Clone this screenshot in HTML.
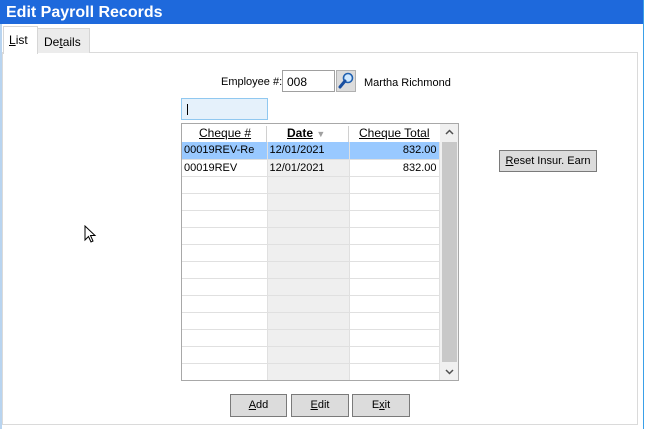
<!DOCTYPE html>
<html><head><style>
*{margin:0;padding:0;box-sizing:border-box}
body{width:646px;height:429px;background:#fff;position:relative;overflow:hidden;font-family:"Liberation Sans",Arial,sans-serif;font-size:11px;color:#000}
.a{position:absolute}
.btn{position:absolute;background:#dcdcdc;border:1px solid #7a7a7a;text-align:center;font-size:11px;line-height:20px}
table{border-collapse:collapse;table-layout:fixed}
td{height:17px;border-bottom:1px solid #e0e0e0;border-right:1px solid #e0e0e0;padding:0 2px;font-size:11px;white-space:nowrap;overflow:hidden}
</style></head><body>
<div class="a" style="left:0;top:0;width:643px;height:24px;background:#1e69dc;color:#fff;font-weight:bold;font-size:16px;line-height:25px;padding-left:6px">Edit Payroll Records</div>
<div class="a" style="left:643px;top:0;width:1px;height:429px;background:#3aa0e8"></div>
<div class="a" style="left:0;top:24px;width:2px;height:405px;background:#b8d4f0"></div>
<div class="a" style="left:2px;top:52px;width:636px;height:373px;border:1px solid #dadada"></div>
<div class="a" style="left:37px;top:28px;width:53px;height:25px;background:#ececec;border:1px solid #d6d6d6;border-bottom:none;line-height:26px;padding-left:6px;font-size:12px">De<u>t</u>ails</div>
<div class="a" style="left:3px;top:26px;width:35px;height:28px;background:#fff;border:1px solid #d6d6d6;border-bottom:none;line-height:26px;padding-left:5px;font-size:12px"><u>L</u>ist</div>

<div class="a" style="left:221px;top:76px">Employee #:</div>
<div class="a" style="left:282px;top:70px;width:53px;height:22px;border:1px solid #a0a0a0;padding:4px 0 0 4px;font-size:12px">008</div>
<div class="a" style="left:336px;top:70px;width:20px;height:22px;background:#dcdcdc;border:1px solid #b0b0b0">
<svg width="18" height="20" viewBox="0 0 18 20"><circle cx="11" cy="7" r="4.5" fill="#cfe8ff" stroke="#2060b0" stroke-width="1.6"/><path d="M8 10 L3 16" stroke="#1a4fa0" stroke-width="3" stroke-linecap="round"/></svg></div>
<div class="a" style="left:364px;top:77px">Martha Richmond</div>

<div class="a" style="left:181px;top:98px;width:87px;height:22px;background:#e5f1fb;border:1px solid #90c8f0"><div style="position:absolute;left:5px;top:5px;width:1px;height:11px;background:#000"></div></div>

<div class="a" style="left:181px;top:123px;width:278px;height:258px;border:1px solid #a8a8a8;overflow:hidden">
<div class="a" style="left:0;top:0;width:257px;height:19px;border-bottom:1px solid #404040;font-size:12px;line-height:18px">
<span class="a" style="left:17px"><u>Cheque #</u></span>
<span class="a" style="left:105px;font-weight:bold"><u>Date</u> <span style="color:#a0a0a0;font-size:9px">▼</span></span>
<span class="a" style="left:177px"><u>Cheque Total</u></span>
<div class="a" style="left:84px;top:2px;width:1px;height:16px;background:#d0d0d0"></div>
<div class="a" style="left:166px;top:2px;width:1px;height:16px;background:#d0d0d0"></div>
</div>
<table class="a" style="left:0;top:18px;width:257px">
<colgroup><col style="width:85px"><col style="width:82px"><col style="width:90px"></colgroup>
<tr style="background:#99c9ff"><td>00019REV-Re</td><td>12/01/2021</td><td style="text-align:right">832.00</td></tr>
<tr><td>00019REV</td><td style="background:#efefef">12/01/2021</td><td style="text-align:right">832.00</td></tr>
<tr><td></td><td style="background:#efefef"></td><td></td></tr>
<tr><td></td><td style="background:#efefef"></td><td></td></tr>
<tr><td></td><td style="background:#efefef"></td><td></td></tr>
<tr><td></td><td style="background:#efefef"></td><td></td></tr>
<tr><td></td><td style="background:#efefef"></td><td></td></tr>
<tr><td></td><td style="background:#efefef"></td><td></td></tr>
<tr><td></td><td style="background:#efefef"></td><td></td></tr>
<tr><td></td><td style="background:#efefef"></td><td></td></tr>
<tr><td></td><td style="background:#efefef"></td><td></td></tr>
<tr><td></td><td style="background:#efefef"></td><td></td></tr>
<tr><td></td><td style="background:#efefef"></td><td></td></tr>
<tr><td></td><td style="background:#efefef"></td><td></td></tr>
</table>
<div class="a" style="left:258px;top:0;width:19px;height:256px;background:#f0f0f0">
<div class="a" style="left:2px;top:18px;width:15px;height:220px;background:#c8c8c8"></div>
<svg class="a" style="left:5px;top:5px" width="9" height="6" viewBox="0 0 9 6"><path d="M1 5 L4.5 1.5 L8 5" fill="none" stroke="#505050" stroke-width="1.5"/></svg>
<svg class="a" style="left:5px;top:245px" width="9" height="6" viewBox="0 0 9 6"><path d="M1 1 L4.5 4.5 L8 1" fill="none" stroke="#505050" stroke-width="1.5"/></svg>
</div>
</div>

<div class="btn" style="left:499px;top:150px;width:98px;height:22px"><u>R</u>eset Insur. Earn</div>
<div class="btn" style="left:230px;top:394px;width:57px;height:23px"><u>A</u>dd</div>
<div class="btn" style="left:291px;top:394px;width:58px;height:23px"><u>E</u>dit</div>
<div class="btn" style="left:352px;top:394px;width:58px;height:23px">E<u>x</u>it</div>

<svg class="a" style="left:84px;top:225px" width="14" height="20" viewBox="0 0 14 20"><path d="M1 1 L1 15 L4.5 11.5 L7 17 L9 16 L6.5 10.5 L11 10.5 Z" fill="#fff" stroke="#000" stroke-width="1"/></svg>
</body></html>
